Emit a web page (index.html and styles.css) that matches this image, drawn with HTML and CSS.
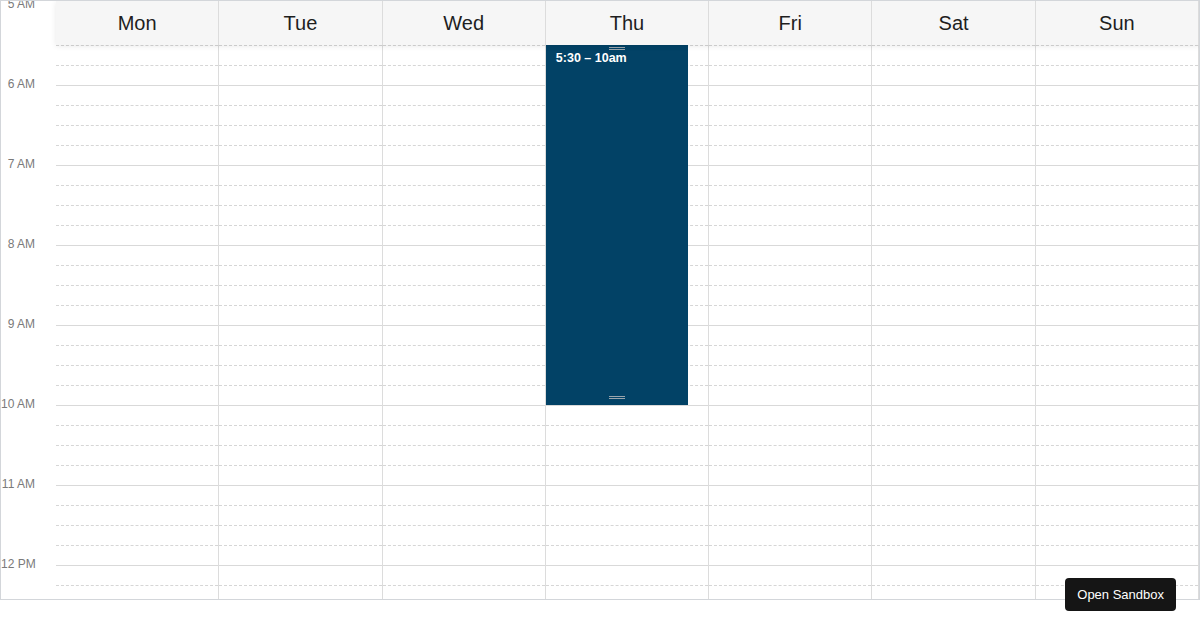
FILE: index.html
```html
<!DOCTYPE html>
<html lang="en">
<head>
    <meta charset="UTF-8">
    <meta name="viewport" content="width=device-width, initial-scale=1.0">
    <title>Week calendar</title>
    <link rel="stylesheet" href="styles.css">
</head>
<body>
    <div class="calendar">
        <div class="week-header">
            <div class="day-name">Mon</div>
            <div class="day-name">Tue</div>
            <div class="day-name">Wed</div>
            <div class="day-name">Thu</div>
            <div class="day-name">Fri</div>
            <div class="day-name">Sat</div>
            <div class="day-name">Sun</div>
        </div>
        <div class="week-body">
            <div class="gutter"></div>
            <div class="days"></div>
        </div>
    </div>
    <a class="sandbox-btn" href="#">Open Sandbox</a>

    <script>
        const hours = ['5 AM', '6 AM', '7 AM', '8 AM', '9 AM', '10 AM', '11 AM', '12 PM'];
        const gutter = document.querySelector('.gutter');
        const days = document.querySelector('.days');

        hours.forEach(function (h) {
            const label = document.createElement('div');
            label.className = 'hour-label';
            label.innerText = h;
            gutter.appendChild(label);
        });

        for (let d = 0; d < 7; d++) {
            const col = document.createElement('div');
            col.className = 'day';
            for (let i = 0; i < hours.length * 4; i++) {
                const slot = document.createElement('div');
                slot.className = i % 4 === 0 ? 'slot hour' : 'slot';
                col.appendChild(slot);
            }
            // Thursday event, 5:30 - 10am
            if (d === 3) {
                const ev = document.createElement('div');
                ev.className = 'event';
                ev.innerHTML = '<span class="event-time">5:30 – 10am</span>';
                col.appendChild(ev);
            }
            days.appendChild(col);
        }
    </script>
</body>
</html>
```

FILE: styles.css
```css
body {
    margin: 0;
    background: #fff;
    font-family: "Liberation Sans", Arial, sans-serif;
    color: #222;
}
.calendar {
    position: relative;
    height: 600px;
    box-sizing: border-box;
    border: 1px solid #d3d6da;
    overflow: hidden;
}
.week-header {
    position: absolute;
    top: 0;
    left: 55px;
    right: 0;
    height: 44px;
    display: grid;
    grid-template-columns: repeat(7, 1fr);
    background: #f6f6f6;
    box-shadow: 0 1px 6px rgba(0, 0, 0, 0.09);
    z-index: 2;
}
.day-name {
    display: flex;
    align-items: center;
    justify-content: center;
    font-size: 20px;
    color: #1e1e1e;
    border-right: 1px solid #dcdcdc;
}
.week-body {
    display: flex;
    padding-top: 4px;
}
.gutter {
    width: 55px;
    flex: none;
    margin-top: -8px;
}
.hour-label {
    height: 80px;
    line-height: 14px;
    font-size: 12px;
    color: #7a7a7a;
    text-align: right;
    white-space: nowrap;
    padding-right: 21px;
    box-sizing: border-box;
}
.days {
    flex: 1;
    display: grid;
    grid-template-columns: repeat(7, 1fr);
}
.day {
    position: relative;
    border-right: 1px solid #dcdcdc;
}
.slot {
    height: 20px;
    box-sizing: border-box;
    border-top: 1px dashed #d6d6d6;
}
.slot.hour {
    border-top: 1px solid #d9d9d9;
}
.event {
    position: absolute;
    top: 40px;
    left: 0;
    right: 20px;
    height: 360px;
    background: #024266;
    padding: 6px 10px;
    box-sizing: border-box;
    z-index: 1;
}
.event::before, .event::after {
    content: "";
    position: absolute;
    left: 50%;
    width: 16px;
    height: 1px;
    margin-left: -8px;
    border-top: 1px solid #9aa5ad;
    border-bottom: 1px solid #9aa5ad;
}
.event::before {
    top: 2px;
}
.event::after {
    bottom: 6px;
}
.event-time {
    display: block;
    line-height: 14px;
    font-size: 12.5px;
    font-weight: bold;
    color: #fff;
}
.sandbox-btn {
    position: fixed;
    right: 24px;
    bottom: 19px;
    height: 33px;
    padding: 0 12px;
    display: flex;
    align-items: center;
    background: #151515;
    color: #fff;
    font-size: 13px;
    text-decoration: none;
    border-radius: 4px;
}
```
